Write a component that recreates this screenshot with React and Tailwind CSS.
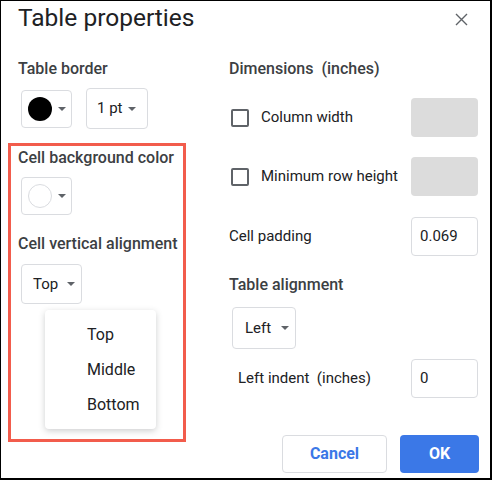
import React from 'react';

function Caret() {
  return (
    <svg width="8" height="4" viewBox="0 0 8 4" className="shrink-0">
      <path d="M0 0h8L4 4z" fill="#5f6368" />
    </svg>
  );
}

function ColorButton({ color, outlined }) {
  return (
    <button className="flex h-[38px] w-[51px] items-center gap-[6px] rounded-[4px] border border-[#dadce0] bg-white pl-[6px]">
      <span
        className={`h-[24px] w-[24px] rounded-full ${outlined ? 'border border-[#dadce0]' : ''}`}
        style={{ backgroundColor: color }}
      />
      <Caret />
    </button>
  );
}

function Select({ label, className }) {
  return (
    <button className={`flex items-center rounded-[4px] border border-[#dadce0] bg-white text-[15px] text-[#202124] ${className}`}>
      <span>{label}</span>
      <Caret />
    </button>
  );
}

function Checkbox() {
  return <span className="h-[18px] w-[18px] shrink-0 rounded-[2px] border-2 border-[#5f6368]" />;
}

function Heading({ children }) {
  return <h2 className="h-[20px] whitespace-pre text-[16px] font-medium leading-[20px] text-[#3c4043]">{children}</h2>;
}

function NumberBox({ value, disabled }) {
  return (
    <div
      className={`flex h-[39px] w-[67px] items-center rounded-[4px] pl-[8px] text-[15px] text-[#202124] ${
        disabled ? 'bg-[#dcdcdc]' : 'border border-[#dadce0] bg-white'
      }`}
    >
      {value}
    </div>
  );
}

export default function App() {
  return (
    <div
      className="relative h-[480px] w-[492px] border-t border-l border-r-2 border-b-2 border-black bg-white text-[#202124]"
      style={{ fontFamily: 'Roboto, "Liberation Sans", sans-serif' }}
    >
      <header className="flex items-start justify-between pl-[17px] pr-[22px] pt-[3px]">
        <h1 className="text-[24.5px] leading-[28px] text-[#202124]">Table properties</h1>
        <svg width="13" height="13" viewBox="0 0 13 13" className="mt-[9px]">
          <path d="M1 1l11 11M12 1L1 12" stroke="#5f6368" strokeWidth="1.4" />
        </svg>
      </header>

      <div className="flex pt-[27px]">
        <div className="ml-[7px] w-[178px] shrink-0">
          <div className="pl-[10px]">
            <Heading>Table border</Heading>
            <div className="mt-[9px] flex h-[41px] items-center gap-[14px] pl-[3px]">
              <ColorButton color="#000000" />
              <Select label="1 pt" className="h-[41px] w-[62px] gap-[6px] pl-[10px]" />
            </div>
          </div>

          <div className="mt-[14px] border-[3px] border-[#f25c4c] pb-[10px] pl-[7px] pt-[2px]">
            <Heading>Cell background color</Heading>
            <div className="mt-[9px] pl-[3px]">
              <ColorButton color="#ffffff" outlined />
            </div>
            <div className="mt-[19px]">
              <Heading>Cell vertical alignment</Heading>
            </div>
            <div className="mt-[10px] pl-[3px]">
              <Select label="Top" className="h-[40px] w-[61px] gap-[9px] pl-[11px]" />
            </div>
            <ul className="ml-[27px] mt-[6px] w-[111px] rounded-[4px] bg-white py-[7px] pl-[42px] text-[16px] leading-[35px] text-[#202124] shadow-[0_2px_6px_rgba(60,64,67,0.25)]">
              <li>Top</li>
              <li>Middle</li>
              <li>Bottom</li>
            </ul>
          </div>
        </div>

        <div className="ml-[43px] w-[249px] text-[15px] text-[#202124]">
          <Heading>Dimensions  (inches)</Heading>
          <div className="mt-[19px] flex h-[39px] items-center justify-between">
            <div className="flex items-center gap-[12px] pl-[2px]">
              <Checkbox />
              <span>Column width</span>
            </div>
            <NumberBox disabled />
          </div>
          <div className="mt-[20px] flex h-[39px] items-center justify-between">
            <div className="flex items-center gap-[12px] pl-[2px]">
              <Checkbox />
              <span>Minimum row height</span>
            </div>
            <NumberBox disabled />
          </div>
          <div className="mt-[21px] flex h-[39px] items-center justify-between">
            <span>Cell padding</span>
            <NumberBox value="0.069" />
          </div>
          <div className="mt-[19px]">
            <Heading>Table alignment</Heading>
          </div>
          <div className="mt-[12px] pl-[3px]">
            <Select label="Left" className="h-[42px] w-[64px] gap-[10px] pl-[12px]" />
          </div>
          <div className="mt-[10px] flex h-[39px] items-center justify-between">
            <span className="whitespace-pre pl-[9px]">Left indent  (inches)</span>
            <NumberBox value="0" />
          </div>
        </div>
      </div>

      <footer className="absolute bottom-[5px] right-[11px] flex gap-[13px]">
        <button className="h-[38px] w-[105px] rounded-[4px] border border-[#dadce0] bg-white text-[16px] font-bold text-[#3b78e7]">
          Cancel
        </button>
        <button className="h-[38px] w-[79px] rounded-[4px] bg-[#3b78e7] text-[16px] font-bold text-white">OK</button>
      </footer>
    </div>
  );
}
